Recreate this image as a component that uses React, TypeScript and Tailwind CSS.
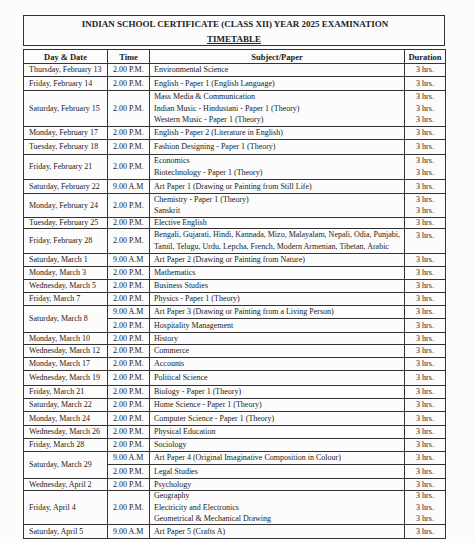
import React from 'react';

type Row = {
    day: string;
    h: string;
    slots: { time: string; subjects: string[]; durations: string[]; h?: string }[];
    topDur?: boolean;
};

const PM = '2.00 P.M.';
const AM = '9.00 A.M';
const D = '3 hrs.';

const rows: Row[] = [
    { day: 'Thursday, February 13', h: 'h-[13px]', slots: [{ time: PM, subjects: ['Environmental Science'], durations: [D] }] },
    { day: 'Friday, February 14', h: 'h-[14px]', slots: [{ time: PM, subjects: ['English - Paper 1 (English Language)'], durations: [D] }] },
    {
        day: 'Saturday, February 15',
        h: 'h-[36px]',
        slots: [{
            time: PM,
            subjects: ['Mass Media & Communication', 'Indian Music - Hindustani - Paper 1 (Theory)', 'Western Music - Paper 1 (Theory)'],
            durations: [D, D, D],
        }],
    },
    { day: 'Monday, February 17', h: 'h-[13px]', slots: [{ time: PM, subjects: ['English - Paper 2 (Literature in English)'], durations: [D] }] },
    { day: 'Tuesday, February 18', h: 'h-[15px]', slots: [{ time: PM, subjects: ['Fashion Designing - Paper 1 (Theory)'], durations: [D] }] },
    { day: 'Friday, February 21', h: 'h-[25px]', slots: [{ time: PM, subjects: ['Economics', 'Biotechnology - Paper 1 (Theory)'], durations: [D, D] }] },
    { day: 'Saturday, February 22', h: 'h-[14px]', slots: [{ time: AM, subjects: ['Art Paper 1 (Drawing or Painting from Still Life)'], durations: [D] }] },
    { day: 'Monday, February 24', h: 'h-[24px]', slots: [{ time: PM, subjects: ['Chemistry - Paper 1 (Theory)', 'Sanskrit'], durations: [D, D] }] },
    { day: 'Tuesday, February 25', h: 'h-[11px]', slots: [{ time: PM, subjects: ['Elective English'], durations: [D] }] },
    {
        day: 'Friday, February 28',
        h: 'h-[25px]',
        topDur: true,
        slots: [{
            time: PM,
            subjects: [
                'Bengali, Gujarati, Hindi, Kannada, Mizo, Malayalam, Nepali, Odia, Punjabi,',
                'Tamil, Telugu, Urdu, Lepcha, French, Modern Armenian, Tibetan, Arabic',
            ],
            durations: [D],
        }],
    },
    { day: 'Saturday, March 1', h: 'h-[13px]', slots: [{ time: AM, subjects: ['Art Paper 2 (Drawing or Painting from Nature)'], durations: [D] }] },
    { day: 'Monday, March 3', h: 'h-[13px]', slots: [{ time: PM, subjects: ['Mathematics'], durations: [D] }] },
    { day: 'Wednesday, March 5', h: 'h-[13px]', slots: [{ time: PM, subjects: ['Business Studies'], durations: [D] }] },
    { day: 'Friday, March 7', h: 'h-[13px]', slots: [{ time: PM, subjects: ['Physics - Paper 1 (Theory)'], durations: [D] }] },
    {
        day: 'Saturday, March 8',
        h: 'h-[13px]',
        slots: [
            { time: AM, subjects: ['Art Paper 3 (Drawing or Painting from a Living Person)'], durations: [D], h: 'h-[13px]' },
            { time: PM, subjects: ['Hospitality Management'], durations: [D], h: 'h-[14px]' },
        ],
    },
    { day: 'Monday, March 10', h: 'h-[12px]', slots: [{ time: PM, subjects: ['History'], durations: [D] }] },
    { day: 'Wednesday, March 12', h: 'h-[13px]', slots: [{ time: PM, subjects: ['Commerce'], durations: [D] }] },
    { day: 'Monday, March 17', h: 'h-[13px]', slots: [{ time: PM, subjects: ['Accounts'], durations: [D] }] },
    { day: 'Wednesday, March 19', h: 'h-[15px]', slots: [{ time: PM, subjects: ['Political Science'], durations: [D] }] },
    { day: 'Friday, March 21', h: 'h-[13px]', slots: [{ time: PM, subjects: ['Biology - Paper 1 (Theory)'], durations: [D] }] },
    { day: 'Saturday, March 22', h: 'h-[13px]', slots: [{ time: PM, subjects: ['Home Science - Paper 1 (Theory)'], durations: [D] }] },
    { day: 'Monday, March 24', h: 'h-[14px]', slots: [{ time: PM, subjects: ['Computer Science - Paper 1 (Theory)'], durations: [D] }] },
    { day: 'Wednesday, March 26', h: 'h-[13px]', slots: [{ time: PM, subjects: ['Physical Education'], durations: [D] }] },
    { day: 'Friday, March 28', h: 'h-[13px]', slots: [{ time: PM, subjects: ['Sociology'], durations: [D] }] },
    {
        day: 'Saturday, March 29',
        h: 'h-[13px]',
        slots: [
            { time: AM, subjects: ['Art Paper 4 (Original Imaginative Composition in Colour)'], durations: [D], h: 'h-[13px]' },
            { time: PM, subjects: ['Legal Studies'], durations: [D], h: 'h-[14px]' },
        ],
    },
    { day: 'Wednesday, April 2', h: 'h-[12px]', slots: [{ time: PM, subjects: ['Psychology'], durations: [D] }] },
    {
        day: 'Friday, April 4',
        h: 'h-[34px]',
        slots: [{ time: PM, subjects: ['Geography', 'Electricity and Electronics', 'Geometrical & Mechanical Drawing'], durations: [D, D, D] }],
    },
    { day: 'Saturday, April 5', h: 'h-[14px]', slots: [{ time: AM, subjects: ['Art Paper 5 (Crafts A)'], durations: [D] }] },
];

const cell = 'border border-[#333] p-0 align-middle overflow-hidden';

export default function App() {
    return (
        <div
            className="w-[474px] h-[543px] bg-[#fcfcfc] text-[#222] overflow-hidden pt-[15px] pl-[23px]"
            style={{ fontFamily: '"Liberation Serif", "Times New Roman", serif' }}
        >
            {/* Title box */}
            <div className="w-[422px] h-[31px] border-[1.5px] border-[#333] flex flex-col items-center font-bold">
                <div className="text-[9px] leading-[10px] mt-[3px] pl-[2px]">
                    INDIAN SCHOOL CERTIFICATE (CLASS XII) YEAR 2025 EXAMINATION
                </div>
                <div className="text-[9px] leading-[10px] mt-[5px] underline">TIMETABLE</div>
            </div>

            <table className="mt-[3px] w-[422px] table-fixed border-collapse border-[1.5px] border-[#333] text-[8px] leading-[10px]">
                <colgroup>
                    <col className="w-[84px]" />
                    <col className="w-[42px]" />
                    <col className="w-[255px]" />
                    <col className="w-[41px]" />
                </colgroup>
                <thead>
                    <tr className="h-[14px] font-bold text-[8.5px]">
                        <th className={`${cell} text-center`}>Day &amp; Date</th>
                        <th className={`${cell} text-center`}>Time</th>
                        <th className={`${cell} text-center`}>Subject/Paper</th>
                        <th className={`${cell} text-center`}>Duration</th>
                    </tr>
                </thead>
                <tbody>
                    {rows.map((r, i) =>
                        r.slots.map((s, j) => (
                            <tr key={`${i}-${j}`} className={s.h ?? r.h}>
                                {j === 0 && (
                                    <td rowSpan={r.slots.length} className={`${cell} pl-[5px] whitespace-nowrap`}>
                                        {r.day}
                                    </td>
                                )}
                                <td className={`${cell} pl-[5px] whitespace-nowrap`}>{s.time}</td>
                                <td className={`${cell} pl-[4px] whitespace-nowrap`}>
                                    <div className="flex flex-col gap-[1.5px]">
                                        {s.subjects.map((t) => (
                                            <div key={t}>{t}</div>
                                        ))}
                                    </div>
                                </td>
                                <td className={`${cell} text-center ${r.topDur ? 'align-top pt-[2px]' : ''}`}>
                                    <div className="flex flex-col gap-[1.5px]">
                                        {s.durations.map((d, k) => (
                                            <div key={k}>{d}</div>
                                        ))}
                                    </div>
                                </td>
                            </tr>
                        ))
                    )}
                </tbody>
            </table>
        </div>
    );
}
